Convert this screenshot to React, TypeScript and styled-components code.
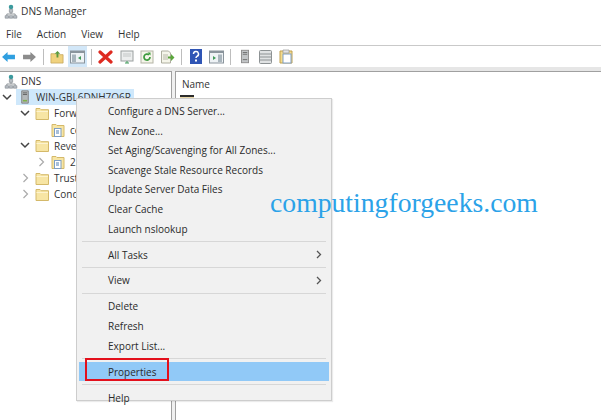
import React from 'react';
import styled, { createGlobalStyle } from 'styled-components';

const GlobalStyle = createGlobalStyle`
  html, body {
    margin: 0;
    padding: 0;
    background: #fff;
  }
  body {
    font-family: "Open Sans", "Noto Sans", sans-serif;
    color: #222;
  }
`;

const Page = styled.div`
  position: relative;
  width: 601px;
  height: 420px;
  overflow: hidden;
  background: #fff;
  font-size: 10px;
`;

const TitleBar = styled.div`
  display: flex;
  align-items: center;
  gap: 3px;
  height: 22px;
  padding-left: 4px;
  font-size: 10.2px;
  color: #333;
`;

const MenuBar = styled.div`
  display: flex;
  gap: 15px;
  height: 23px;
  padding-left: 6px;
  align-items: center;
  color: #333;
`;

const Toolbar = styled.div`
  display: flex;
  align-items: center;
  height: 21px;
  margin-left: -1px;
  border-top: 1px solid #c9c9c9;
  border-bottom: 4px solid #e6e6e6;
  gap: 1.7px;
`;

const ToolButton = styled.div<{ $active?: boolean }>`
  display: flex;
  align-items: center;
  justify-content: center;
  width: 19px;
  height: 21px;
  background: ${({ $active }) => ($active ? '#d2e7f8' : 'transparent')};
`;

const ToolDivider = styled.div`
  width: 1px;
  height: 16px;
  background: #bdbdbd;
  margin: 0 2.3px;
`;

const Panes = styled.div`
  display: flex;
  height: 349px;
`;

const TreePane = styled.div`
  width: 171px;
  padding-top: 1px;
  border-right: 1px solid #a0a0a0;
  border-top: 1px solid #a0a0a0;
`;

const Splitter = styled.div`
  width: 3px;
  background: #f0f0f0;
`;

const ListPane = styled.div`
  flex: 1;
  padding: 5px 0 0 6px;
  border-left: 1px solid #a0a0a0;
  border-top: 1px solid #a0a0a0;
  color: #333;
`;

const TreeRow = styled.div<{ $indent: number; $clip?: boolean }>`
  display: flex;
  align-items: center;
  height: 16.2px;
  box-sizing: border-box;
  padding-left: ${({ $indent }) => $indent}px;
  gap: 3px;
  white-space: nowrap;
  color: #333;
  width: ${({ $clip }) => ($clip ? '76px' : 'auto')};
  overflow: ${({ $clip }) => ($clip ? 'hidden' : 'visible')};

  svg {
    flex: none;
  }
`;

const Caret = styled.span`
  display: flex;
  flex: none;
  width: 12px;
  justify-content: center;
`;

const Selected = styled.span`
  display: inline-flex;
  align-items: center;
  gap: 6px;
  height: 16px;
  padding: 0 3px 0 4px;
  background: #cfe8fb;
`;

const ContextMenu = styled.div`
  position: absolute;
  left: 76px;
  top: 98px;
  width: 256px;
  height: 303px;
  padding: 2.2px 2px;
  box-sizing: border-box;
  display: flex;
  flex-direction: column;
  background: #f1f1f1;
  border: 1px solid #cdcdcd;
  box-shadow: 1px 1px 1px rgba(0, 0, 0, 0.08);
  color: #2a2a2a;
`;

const MenuItem = styled.div<{ $hot?: boolean }>`
  position: relative;
  display: flex;
  align-items: center;
  justify-content: space-between;
  height: 19.6px;
  flex: none;
  padding: 0 7px 0 29px;
  background: ${({ $hot }) => ($hot ? '#91c9f7' : 'transparent')};
`;

const RedBox = styled.div`
  position: absolute;
  left: 6px;
  top: -4px;
  width: 80px;
  height: 19px;
  border: 2px solid #e3101c;
`;

const MenuSep = styled.div`
  height: 1px;
  margin: 2.7px 3px;
  background: #d7d7d7;
  flex: none;
`;

const Watermark = styled.div`
  position: absolute;
  left: 270px;
  top: 186px;
  font-family: "Liberation Serif", serif;
  font-size: 27.7px;
  line-height: 34px;
  color: #2ba2e8;
  white-space: nowrap;
`;

const RecordIcon = styled.div`
  width: 14px;
  height: 4px;
  margin: 4px 0 0 -2px;
  background: linear-gradient(#2b2b2b 0 2px, #e9d7a8 2px);
`;

const Sub = () => (
  <svg width="6" height="9" viewBox="0 0 6 9">
    <path d="M1 1l3.5 3.5L1 8" fill="none" stroke="#555" strokeWidth="1.3" />
  </svg>
);

const Open = () => (
  <svg width="10" height="7" viewBox="0 0 10 7">
    <path d="M1 1l4 4 4-4" fill="none" stroke="#444" strokeWidth="1.5" />
  </svg>
);

const Closed = () => (
  <svg width="7" height="10" viewBox="0 0 7 10">
    <path d="M1.5 1l4 4-4 4" fill="none" stroke="#aaa" strokeWidth="1.2" />
  </svg>
);

const Folder = () => (
  <svg width="17" height="13" viewBox="0 0 17 13">
    <path d="M2 1.500h4l1.200 1.200H14.500v9.800H2z" fill="#f7e5a4" stroke="#d4b96a" />
    <path d="M2.500 4.500h11.500" stroke="#fdf3cf" />
  </svg>
);

const ZoneFolder = () => (
  <svg width="17" height="14" viewBox="-1 0 17 14">
    <path d="M1 1.500h4l1 1h7v11H1z" fill="#f7e5a4" stroke="#d4b96a" />
    <rect x="3.500" y="5.500" width="6.500" height="8" fill="#fff" stroke="#7f9fc5" />
    <path d="M5 8h3M5 10h3" stroke="#4f7fb5" />
  </svg>
);

const Network = () => (
  <svg width="14" height="15" viewBox="0 0 16 18">
    <circle cx="8" cy="3.500" r="2.700" fill="#3c9a9e" />
    <path d="M6 6.500h4v3.500H6z" fill="#b9bfc5" stroke="#7b8288" strokeWidth=".7" />
    <path d="M8 10v2M3 14v-2h10v2" fill="none" stroke="#7b8288" />
    <path d="M1 14h4v3H1zM6 14h4v3H6zM11 14h4v3h-4z" fill="#b9bfc5" stroke="#7b8288" strokeWidth=".7" />
  </svg>
);

const Server = () => (
  <svg width="10" height="14" viewBox="0 0 10 17">
    <path d="M1 1h8v15H1z" fill="#b4b8ba" stroke="#777" />
    <path d="M2.500 3.500h5M2.500 5.500h5" stroke="#555" />
    <path d="M2.500 12h5v2h-5z" fill="#7fb04d" />
  </svg>
);

const ArrowLeft = () => (
  <svg width="15" height="12" viewBox="0 0 16 13">
    <path d="M1 6.500L7 1v3h8v5H7v3z" fill="#2f9fe0" />
  </svg>
);

const ArrowRight = () => (
  <svg width="15" height="12" viewBox="0 0 16 13">
    <path d="M15 6.500L9 1v3H1v5h8v3z" fill="#8c8c8c" />
  </svg>
);

const UpFolder = () => (
  <svg width="14" height="14" viewBox="0 0 15 15">
    <path d="M1 4h5l1 1h7v9H1z" fill="#f0d27e" stroke="#c4a557" strokeWidth=".8" />
    <path d="M8 1l3 3H9v4H7V4H5z" fill="#5b9a3c" />
  </svg>
);

const ConsoleTree = () => (
  <svg width="15" height="14" viewBox="0 0 15 14">
    <rect x=".5" y="1" width="14" height="12" fill="#eef2f5" stroke="#8a949c" />
    <path d="M1 1h13v2H1z" fill="#8a949c" />
    <path d="M2 4.500h4V12H2z" fill="#a9b5bd" />
    <path d="M11 6v4L8 8z" fill="#3f9a58" />
  </svg>
);

const Cross = () => (
  <svg width="15" height="14" viewBox="0 0 15 14">
    <path d="M2 2l11 10M13 2L2 12" stroke="#de2a20" strokeWidth="3.200" strokeLinecap="round" />
  </svg>
);

const PageIcon = () => (
  <svg width="14" height="14" viewBox="0 0 14 14">
    <rect x="1" y="1" width="12" height="10" fill="#eceeee" stroke="#9a9f9f" />
    <path d="M3 4h8M3 6h8" stroke="#c2c6c6" />
    <path d="M5 13h4M7 11v2" stroke="#3f9a58" />
  </svg>
);

const Refresh = () => (
  <svg width="14" height="14" viewBox="0 0 14 14">
    <rect x="1" y="1" width="12" height="12" fill="#f5f5ea" stroke="#b3b3a5" />
    <path d="M10 7a3 3 0 1 1-1-2.200" fill="none" stroke="#3c9a3c" strokeWidth="1.700" />
    <path d="M7.500 2.500h3v3z" fill="#3c9a3c" />
  </svg>
);

const Export = () => (
  <svg width="15" height="14" viewBox="0 0 15 14">
    <path d="M1.500 1h7l2 2v10h-9z" fill="#f5f5ea" stroke="#aeae9f" />
    <path d="M3 5h5M3 7h5M3 9h5" stroke="#b8b8a8" />
    <path d="M8 6.500h3V4l3.500 3.500L11 11V8.500H8z" fill="#5aa63c" />
  </svg>
);

const HelpIcon = () => (
  <svg width="12" height="15" viewBox="0 0 12 15">
    <rect width="12" height="15" fill="#2f55b5" />
    <path d="M3.500 5a2.500 2.500 0 1 1 3.500 2.300c-.7.4-1 .8-1 1.700" fill="none" stroke="#fff" strokeWidth="1.500" />
    <rect x="5" y="10.500" width="2" height="2" fill="#fff" />
  </svg>
);

const ActionPane = () => (
  <svg width="15" height="14" viewBox="0 0 15 14">
    <rect x=".5" y="1" width="14" height="12" fill="#eef2f5" stroke="#8a949c" />
    <path d="M1 1h13v2H1z" fill="#8a949c" />
    <path d="M9 4.500h4V12H9z" fill="#a9b5bd" />
    <path d="M4 6v4l3-2z" fill="#3f9a58" />
  </svg>
);

const ServerBar = () => (
  <svg width="8" height="15" viewBox="0 0 9 15">
    <rect x=".5" y=".5" width="8" height="14" fill="#c2c5c7" stroke="#8a8a8a" />
    <path d="M2 3h5M2 5h5M2 11h5" stroke="#6b6b6b" />
  </svg>
);

const Records = () => (
  <svg width="13" height="14" viewBox="0 0 13 14">
    <rect x=".5" y=".5" width="12" height="13" rx="1" fill="#e0e2e3" stroke="#8d9294" />
    <path d="M1 4h11M1 7h11M1 10h11" stroke="#8d9294" />
  </svg>
);

const Clip = () => (
  <svg width="14" height="15" viewBox="0 0 14 15">
    <path d="M1 2h12v12H1z" fill="#f5db8b" stroke="#c0a050" />
    <rect x="4" y="5" width="8" height="9" fill="#fff" stroke="#7f9fc5" />
    <path d="M4 1h6v3H4z" fill="#e4e4e4" stroke="#999" strokeWidth=".7" />
  </svg>
);

const treeRows = [
  { indent: 19, icon: <Folder />, label: 'Forward Lookup Zones', caret: <Open /> },
  { indent: 35, icon: <ZoneFolder />, label: 'computingforgeeks.com', caret: null },
  { indent: 19, icon: <Folder />, label: 'Reverse Lookup Zones', caret: <Open /> },
  { indent: 35, icon: <ZoneFolder />, label: '2.168.192.in-addr.arpa', caret: <Closed /> },
  { indent: 19, icon: <Folder />, label: 'Trust Points', caret: <Closed /> },
  { indent: 19, icon: <Folder />, label: 'Conditional Forwarders', caret: <Closed /> },
];

const App = () => (
  <Page>
    <GlobalStyle />
    <TitleBar>
      <Network />
      DNS Manager
    </TitleBar>
    <MenuBar>
      <span>File</span>
      <span>Action</span>
      <span>View</span>
      <span>Help</span>
    </MenuBar>
    <Toolbar>
      <ToolButton><ArrowLeft /></ToolButton>
      <ToolButton><ArrowRight /></ToolButton>
      <ToolDivider />
      <ToolButton><UpFolder /></ToolButton>
      <ToolButton $active><ConsoleTree /></ToolButton>
      <ToolDivider />
      <ToolButton><Cross /></ToolButton>
      <ToolButton><PageIcon /></ToolButton>
      <ToolButton><Refresh /></ToolButton>
      <ToolButton><Export /></ToolButton>
      <ToolDivider />
      <ToolButton><HelpIcon /></ToolButton>
      <ToolButton><ActionPane /></ToolButton>
      <ToolDivider />
      <ToolButton><ServerBar /></ToolButton>
      <ToolButton><Records /></ToolButton>
      <ToolButton><Clip /></ToolButton>
    </Toolbar>
    <Panes>
      <TreePane>
        <TreeRow $indent={4}>
          <Network />
          DNS
        </TreeRow>
        <TreeRow $indent={1}>
          <Caret><Open /></Caret>
          <Selected>
            <Server />
            WIN-GBL6DNH7O6R
          </Selected>
        </TreeRow>
        {treeRows.map((row) => (
          <TreeRow key={row.label} $indent={row.indent} $clip>
            <Caret>{row.caret}</Caret>
            {row.icon}
            {row.label}
          </TreeRow>
        ))}
      </TreePane>
      <Splitter />
      <ListPane>
        Name
        <RecordIcon />
      </ListPane>
    </Panes>
    <ContextMenu>
      <MenuItem>Configure a DNS Server...</MenuItem>
      <MenuItem>New Zone...</MenuItem>
      <MenuItem>Set Aging/Scavenging for All Zones...</MenuItem>
      <MenuItem>Scavenge Stale Resource Records</MenuItem>
      <MenuItem>Update Server Data Files</MenuItem>
      <MenuItem>Clear Cache</MenuItem>
      <MenuItem>Launch nslookup</MenuItem>
      <MenuSep />
      <MenuItem>All Tasks<Sub /></MenuItem>
      <MenuSep />
      <MenuItem>View<Sub /></MenuItem>
      <MenuSep />
      <MenuItem>Delete</MenuItem>
      <MenuItem>Refresh</MenuItem>
      <MenuItem>Export List...</MenuItem>
      <MenuSep />
      <MenuItem $hot>
        Properties
        <RedBox />
      </MenuItem>
      <MenuSep />
      <MenuItem>Help</MenuItem>
    </ContextMenu>
    <Watermark>computingforgeeks.com</Watermark>
  </Page>
);

export default App;
